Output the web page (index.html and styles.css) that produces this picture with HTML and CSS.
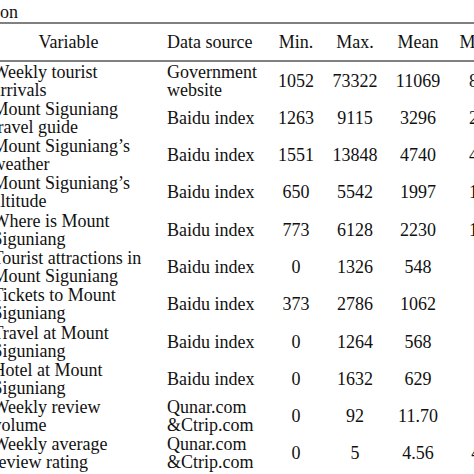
FILE: index.html
```html
<!DOCTYPE html>
<html lang="en">
<head>
<meta charset="utf-8">
<title>Variable description</title>
<link rel="stylesheet" href="styles.css">
</head>
<body>
<div class="sheet">
  <div class="caption"><span>Table 1 Variable description</span></div>
  <table class="stats">
    <colgroup>
      <col class="c-var"><col class="c-src"><col class="c-min"><col class="c-max"><col class="c-mean"><col class="c-med">
    </colgroup>
    <thead>
      <tr><th class="var-h">Variable</th><th class="src">Data source</th><th>Min.</th><th>Max.</th><th>Mean</th><th>Median</th></tr>
    </thead>
    <tbody>
      <tr><td class="var">Weekly tourist<br>arrivals</td><td class="src">Government<br>website</td><td>1052</td><td>73322</td><td>11069</td><td>8216</td></tr>
      <tr><td class="var">Mount Siguniang<br>travel guide</td><td class="src">Baidu index</td><td>1263</td><td>9115</td><td>3296</td><td>2938</td></tr>
      <tr><td class="var">Mount Siguniang’s<br>weather</td><td class="src">Baidu index</td><td>1551</td><td>13848</td><td>4740</td><td>4402</td></tr>
      <tr><td class="var">Mount Siguniang’s<br>altitude</td><td class="src">Baidu index</td><td>650</td><td>5542</td><td>1997</td><td>1826</td></tr>
      <tr><td class="var">Where is Mount<br>Siguniang</td><td class="src">Baidu index</td><td>773</td><td>6128</td><td>2230</td><td>1987</td></tr>
      <tr><td class="var">Tourist attractions in<br>Mount Siguniang</td><td class="src">Baidu index</td><td>0</td><td>1326</td><td>548</td><td>53</td></tr>
      <tr><td class="var">Tickets to Mount<br>Siguniang</td><td class="src">Baidu index</td><td>373</td><td>2786</td><td>1062</td><td>97</td></tr>
      <tr><td class="var">Travel at Mount<br>Siguniang</td><td class="src">Baidu index</td><td>0</td><td>1264</td><td>568</td><td>55</td></tr>
      <tr><td class="var">Hotel at Mount<br>Siguniang</td><td class="src">Baidu index</td><td>0</td><td>1632</td><td>629</td><td>60</td></tr>
      <tr><td class="var">Weekly review<br>volume</td><td class="src">Qunar.com<br>&amp;Ctrip.com</td><td>0</td><td>92</td><td>11.70</td><td>10</td></tr>
      <tr><td class="var">Weekly average<br>review rating</td><td class="src">Qunar.com<br>&amp;Ctrip.com</td><td>0</td><td>5</td><td>4.56</td><td>4.60</td></tr>
    </tbody>
  </table>
</div>
</body>
</html>
```

FILE: styles.css
```css
html, body {
  margin: 0;
  padding: 0;
  background: #ffffff;
}
body {
  width: 474px;
  height: 474px;
  overflow: hidden;
  font-family: "Liberation Serif", "Times New Roman", serif;
  font-size: 18px;
  line-height: 18px;
  color: #111111;
}
.sheet {
  margin-left: -8px;
  width: 560px;
}
.caption {
  width: 26px;
  height: 22px;
  display: flex;
  justify-content: flex-end;
  padding-top: 3px;
  box-sizing: border-box;
  white-space: nowrap;
}
.stats {
  border-collapse: collapse;
  table-layout: fixed;
  width: 532px;
}
.c-var { width: 153px; }
.c-src { width: 123px; }
.c-min { width: 56px; }
.c-max { width: 62px; }
.c-mean { width: 64px; }
.c-med { width: 74px; }
.stats th {
  font-weight: normal;
  text-align: center;
  padding: 9px 0 9px;
  border-top: 2px solid #808080;
  border-bottom: 2px solid #808080;
  height: 18px;
  white-space: nowrap;
}
.stats th.src {
  text-align: left;
  padding-left: 22px;
}
.stats td {
  text-align: center;
  vertical-align: middle;
  padding: 0.65px 0;
  white-space: nowrap;
}
.stats td.var {
  text-align: left;
  padding-left: 0.5px;
}
.stats td.src {
  text-align: left;
  padding-left: 22px;
}
```
